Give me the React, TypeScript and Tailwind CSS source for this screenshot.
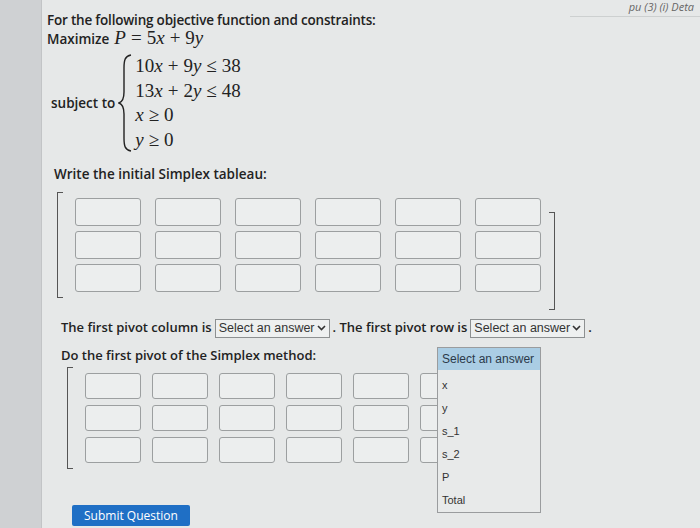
import React from 'react';

const sans = { fontFamily: '"Open Sans", "DejaVu Sans", sans-serif' };
const math = { fontFamily: '"Liberation Serif", "DejaVu Serif", serif' };

function Cell({ w, h }: { w: string; h: string }) {
  return <div className={`${w} ${h} rounded-[3px] border border-[#9c9fa0] bg-[#eceeee]`} />;
}

function Matrix({ big }: { big?: boolean }) {
  const rows = [0, 1, 2];
  const cols = [0, 1, 2, 3, 4, 5];
  return (
    <div className="flex items-stretch">
      <div className="w-[6px] border-l border-y border-[#555]" />
      <div className={big ? 'flex flex-col gap-[5px] py-[6px] pl-[12px] pr-[8px]' : 'flex flex-col gap-[6px] py-[6px] pl-[12px] pr-[8px]'}>
        {rows.map((r) => (
          <div key={r} className={big ? 'flex gap-[14px]' : 'flex gap-[11px]'}>
            {cols.map((c) => (
              <Cell key={c} w={big ? 'w-[66px]' : 'w-[56px]'} h={big ? 'h-[28px]' : 'h-[26px]'} />
            ))}
          </div>
        ))}
      </div>
      {big && <div className="w-[6px] border-r border-y border-[#555] mt-[20px] -mb-[12px]" />}
    </div>
  );
}

function Select() {
  return (
    <span
      className="inline-flex items-center h-[19px] px-[3px] border border-[#8d9091] bg-[#eef0f0] text-[12.5px] font-normal text-[#333] mx-[3px]"
      style={{ fontFamily: '"Liberation Sans", Arial, sans-serif' }}
    >
      Select an answer
      <svg width="9" height="6" viewBox="0 0 9 6" className="ml-[2px]">
        <path d="M1 1l3.5 3.5L8 1" stroke="#333" strokeWidth="1.6" fill="none" />
      </svg>
    </span>
  );
}

function Brace() {
  return (
    <svg width="14" height="98" viewBox="0 0 14 98" className="mx-[3px]">
      <path
        d="M13 1 C7 2 6 6 6 14 L6 38 C6 45 4 48 1 49 C4 50 6 53 6 60 L6 84 C6 92 7 96 13 97"
        stroke="#222"
        strokeWidth="1.4"
        fill="none"
      />
    </svg>
  );
}

function Op({ c }: { c: string }) {
  return <span className="mx-[5px]">{c}</span>;
}

export default function App() {
  const options = ['x', 'y', 's_1', 's_2', 'P', 'Total'];

  return (
    <div className="flex w-[700px] h-[528px] overflow-hidden bg-[#e6e8e8] text-[#222]" style={sans}>
      <div className="w-[42px] shrink-0 bg-[#cfd1d3] border-r border-[#c2c4c6]" />
      <div className="relative flex-1 pl-[5px] pt-[12px]">
        <div className="absolute right-[6px] top-[1px] text-[11px] leading-[12px] text-[#666] italic">pu (3) (i) Deta</div>
        <div className="absolute right-0 top-[16px] w-[130px] h-px bg-[#cdd0d0]" />

        <div className="text-[13.5px] leading-[17px] font-semibold tracking-[-0.2px]">
          For the following objective function and constraints:
        </div>
        <div className="text-[13.5px] leading-[18px] font-semibold flex items-baseline">
          <span>Maximize</span>
          <span className="ml-[5px] text-[19px] font-normal" style={math}>
            <i>P</i>
            <Op c="=" />5<i>x</i>
            <Op c="+" />9<i>y</i>
          </span>
        </div>

        <div className="flex items-center mt-[6px] ml-[4px]">
          <span className="text-[13.5px] font-semibold">subject to</span>
          <Brace />
          <div className="flex flex-col text-[19px] leading-[24.5px]" style={math}>
            <span>
              10<i>x</i>
              <Op c="+" />9<i>y</i>
              <Op c="≤" />38
            </span>
            <span>
              13<i>x</i>
              <Op c="+" />2<i>y</i>
              <Op c="≤" />48
            </span>
            <span>
              <i>x</i>
              <Op c="≥" />0
            </span>
            <span>
              <i>y</i>
              <Op c="≥" />0
            </span>
          </div>
        </div>

        <div className="text-[13.5px] font-semibold mt-[12px] ml-[7px]">Write the initial Simplex tableau:</div>

        <div className="mt-[8px] ml-[10px]">
          <Matrix big />
        </div>

        <div className="flex items-center text-[13px] font-semibold mt-[20px] ml-[14px]">
          <span>The first pivot column is</span>
          <Select />
          <span>. The first pivot row is</span>
          <Select />
          <span>.</span>
        </div>

        <div className="text-[13px] font-semibold mt-[8px] ml-[14px]">Do the first pivot of the Simplex method:</div>

        <div className="mt-[2px] ml-[20px]">
          <Matrix />
        </div>

        <button className="mt-[36px] ml-[25px] h-[21px] px-[12px] rounded-[2px] bg-[#1f6fc5] text-white text-[12px] leading-[21px]">
          Submit Question
        </button>

        <div
          className="absolute left-[395px] top-[347px] w-[104px] h-[166px] border border-[#9a9c9e] bg-[#e8eaea] text-[11px] text-[#333]"
          style={{ fontFamily: '"Liberation Sans", Arial, sans-serif' }}
        >
          <div className="h-[22px] flex items-center px-[4px] bg-[#aacde4] text-[12px] whitespace-nowrap text-[#2a3a4a]">
            Select an answer
          </div>
          <div className="flex flex-col pl-[4px] pt-[4px]">
            {options.map((o) => (
              <div key={o} className="h-[23px] flex items-center">
                {o}
              </div>
            ))}
          </div>
        </div>
      </div>
    </div>
  );
}
